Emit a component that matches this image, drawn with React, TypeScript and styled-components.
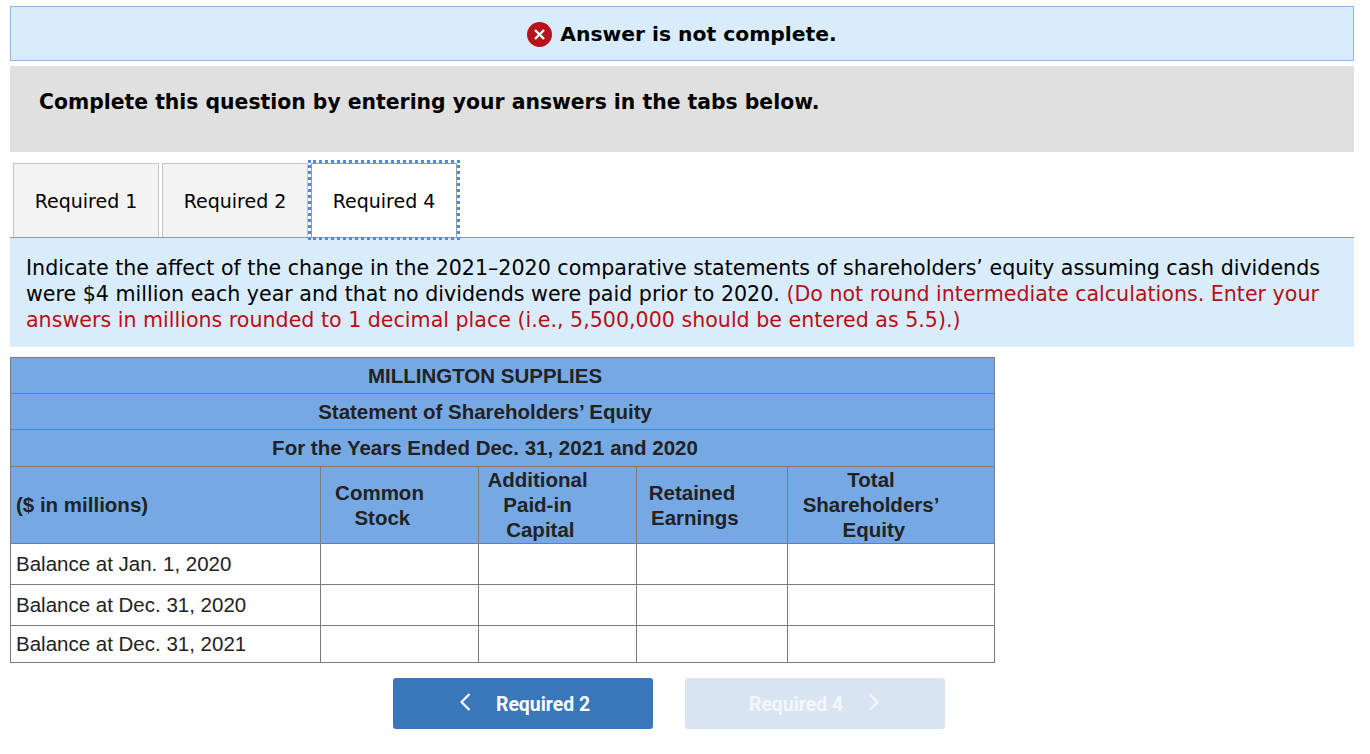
import styled, { createGlobalStyle } from 'styled-components';

const GlobalStyle = createGlobalStyle`
	html, body {
		margin: 0;
		padding: 0;
		background: #fff;
	}
`;

const Page = styled.div`
	box-sizing: border-box;
	width: 1370px;
	height: 754px;
	padding: 6px 16px 0 10px;
	overflow: hidden;
	font-family: 'DejaVu Sans', Verdana, sans-serif;
	color: #000;
`;

const AlertBar = styled.div`
	box-sizing: border-box;
	display: flex;
	align-items: center;
	justify-content: center;
	gap: 8px;
	height: 55px;
	padding-top: 1px;
	background: #d9ecfb;
	border: 1px solid #8ab8e6;
	font-size: 20.3px;
	font-weight: 700;
`;

const ErrorIcon = styled.svg`
	width: 25px;
	height: 25px;
	flex: none;
`;

const Instruction = styled.div`
	box-sizing: border-box;
	height: 86px;
	margin-top: 5px;
	padding: 23px 29px 0;
	background: #e0e0e0;
	font-size: 20.37px;
	line-height: 26px;
	font-weight: 700;
`;

const TabRow = styled.div`
	display: flex;
	gap: 3px;
	height: 74px;
	margin-top: 11px;
	padding-left: 3px;
`;

const Tab = styled.div<{ $active?: boolean }>`
	box-sizing: border-box;
	display: flex;
	align-items: center;
	justify-content: center;
	width: 146px;
	height: 74px;
	background: ${({ $active }) => ($active ? '#fff' : '#f3f3f3')};
	border: 1px solid #c4c4c4;
	border-bottom: none;
	font-size: 19px;
	${({ $active }) =>
		$active &&
		`
		border-color: #9a9a9a;
		outline: 3px dotted #4a8ad6;
		outline-offset: 0;
		position: relative;
		z-index: 1;
	`}
`;

const QuestionPanel = styled.div`
	box-sizing: border-box;
	height: 110px;
	padding: 17px 16px 0;
	background: #d9ecfb;
	border-top: 1px solid #999;
	font-size: 20.6px;
	line-height: 26px;
`;

const RedText = styled.span`
	color: #b70f16;
`;

const StatementTable = styled.table`
	width: 984px;
	margin-top: 10px;
	border-collapse: collapse;
	table-layout: fixed;
	font-family: 'Liberation Sans', Arial, sans-serif;
	font-size: 20.5px;
	color: #222;
`;

const TitleCell = styled.th<{ $height: number }>`
	height: ${({ $height }) => $height}px;
	padding: 0 35px 0 0;
	background: #76a9e4;
	border: 1px solid #7b7b7b;
	font-weight: 700;
	line-height: 24px;
	text-align: center;
`;

const ColumnHead = styled.th<{ $left?: boolean }>`
	box-sizing: border-box;
	height: 76px;
	padding: ${({ $left }) => ($left ? '0 0 1px 5px' : '0 40px 1px 0')};
	background: #76a9e4;
	border: 1px solid #7b7b7b;
	font-weight: 700;
	line-height: 25px;
	text-align: ${({ $left }) => ($left ? 'left' : 'center')};
`;

const LabelCell = styled.td<{ $height: number }>`
	height: ${({ $height }) => $height}px;
	padding: 0 0 0 5px;
	border: 1px solid #7b7b7b;
`;

const ValueCell = styled.td`
	padding: 0;
	border: 1px solid #7b7b7b;
`;

const NavRow = styled.div`
	display: flex;
	gap: 32px;
	margin-top: 15px;
	padding-left: 383px;
`;

const NavButton = styled.div<{ $disabled?: boolean }>`
	box-sizing: border-box;
	display: flex;
	align-items: center;
	justify-content: center;
	gap: 25px;
	width: 260px;
	height: 51px;
	padding: ${({ $disabled }) => ($disabled ? '2px 2px 0 0' : '2px 0 0 4px')};
	border-radius: 3px;
	background: ${({ $disabled }) => ($disabled ? '#d8e4f1' : '#3a76ba')};
	color: ${({ $disabled }) => ($disabled ? '#f3f7fb' : '#fff')};
	font-family: Roboto, 'Liberation Sans', sans-serif;
	font-size: 19.4px;
	font-weight: 700;
`;

const Chevron = styled.svg`
	width: 11px;
	height: 18px;
	flex: none;
	margin-top: -5px;
	fill: none;
	stroke: currentColor;
	stroke-width: 2.2;
`;

const rows = [
	{ label: 'Balance at Jan. 1, 2020', height: 40 },
	{ label: 'Balance at Dec. 31, 2020', height: 40 },
	{ label: 'Balance at Dec. 31, 2021', height: 36 },
];

const App = (): JSX.Element => {
	return (
		<Page>
			<GlobalStyle />
			<AlertBar>
				<ErrorIcon viewBox="0 0 25 25">
					<circle cx="12.5" cy="12.5" r="12.5" fill="#b5121b" />
					<path d="M8 8l9 9M17 8l-9 9" stroke="#fff" strokeWidth="2.4" />
				</ErrorIcon>
				Answer is not complete.
			</AlertBar>
			<Instruction>Complete this question by entering your answers in the tabs below.</Instruction>
			<TabRow>
				<Tab>Required 1</Tab>
				<Tab>Required 2</Tab>
				<Tab $active>Required 4</Tab>
			</TabRow>
			<QuestionPanel>
				Indicate the affect of the change in the 2021–2020 comparative statements of shareholders’ equity
				assuming cash dividends were $4 million each year and that no dividends were paid prior to 2020.{' '}
				<RedText>
					(Do not round intermediate calculations. Enter your answers in millions rounded to 1 decimal place
					(i.e., 5,500,000 should be entered as 5.5).)
				</RedText>
			</QuestionPanel>
			<StatementTable>
				<colgroup>
					<col width="310" />
					<col width="158" />
					<col width="158" />
					<col width="151" />
					<col width="207" />
				</colgroup>
				<thead>
					<tr>
						<TitleCell colSpan={5} $height={35}>
							MILLINGTON SUPPLIES
						</TitleCell>
					</tr>
					<tr>
						<TitleCell colSpan={5} $height={35}>
							Statement of Shareholders’ Equity
						</TitleCell>
					</tr>
					<tr>
						<TitleCell colSpan={5} $height={36}>
							For the Years Ended Dec. 31, 2021 and 2020
						</TitleCell>
					</tr>
					<tr>
						<ColumnHead $left>($ in millions)</ColumnHead>
						<ColumnHead>
							Common
							<br />
							&nbsp;Stock
						</ColumnHead>
						<ColumnHead>
							Additional
							<br />
							Paid-in
							<br />
							&nbsp;Capital
						</ColumnHead>
						<ColumnHead>
							Retained
							<br />
							&nbsp;Earnings
						</ColumnHead>
						<ColumnHead>
							Total
							<br />
							Shareholders’
							<br />
							&nbsp;Equity
						</ColumnHead>
					</tr>
				</thead>
				<tbody>
					{rows.map(({ label, height }) => (
						<tr key={label}>
							<LabelCell $height={height}>{label}</LabelCell>
							<ValueCell />
							<ValueCell />
							<ValueCell />
							<ValueCell />
						</tr>
					))}
				</tbody>
			</StatementTable>
			<NavRow>
				<NavButton>
					<Chevron viewBox="0 0 11 18">
						<path d="M9.5 1L1.5 9L9.5 17" />
					</Chevron>
					Required 2
				</NavButton>
				<NavButton $disabled>
					Required 4
					<Chevron viewBox="0 0 11 18">
						<path d="M1.5 1L9.5 9L1.5 17" />
					</Chevron>
				</NavButton>
			</NavRow>
		</Page>
	);
};

export default App;
